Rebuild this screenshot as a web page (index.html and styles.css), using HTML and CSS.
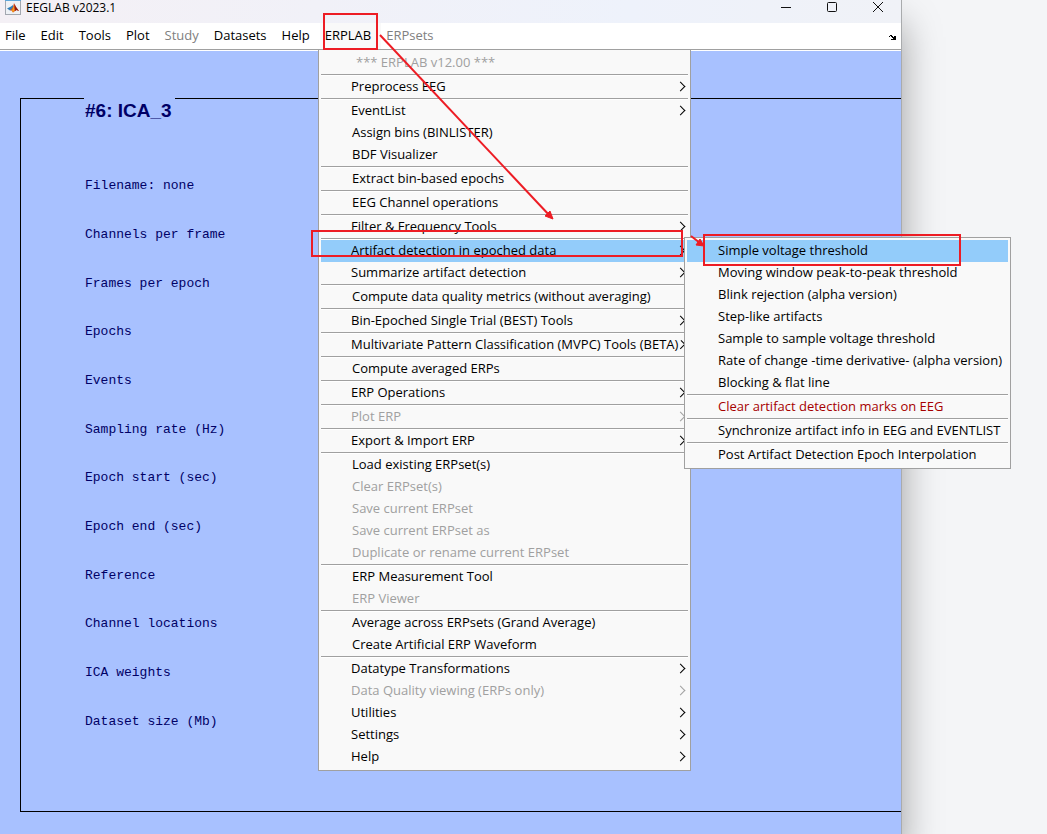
FILE: index.html
```html
<!DOCTYPE html>
<html lang="en">
<head>
<meta charset="utf-8">
<title>EEGLAB v2023.1</title>
<link rel="stylesheet" href="styles.css">
</head>
<body>
<div class="window">
  <header class="titlebar">
    <svg class="logo" viewBox="0 0 16 16" width="16" height="16" aria-hidden="true">
      <rect x="0.5" y="-2" width="15" height="16.5" fill="#eef1f5" stroke="#a3a8b0"/>
      <rect x="0" y="0" width="16" height="1" fill="#5fa6d8"/>
      <path d="M2 8.500 L6 6.500 L8 5 L8 9 L5 10.500 Z" fill="#2f7fb8"/>
      <path d="M5 10.500 L8 7 L9 3 L11 7 L14 11 L11.500 10 L8 12.500 L6.500 10.500 Z" fill="#d9541e"/>
      <path d="M9.500 4 L11 7 L14 11 L11.500 10 L10 11 Z" fill="#8f1d12"/>
      <path d="M7 11 L8.500 6 L9.500 10 L8 12.500 Z" fill="#f7a11b"/>
    </svg>
    <h1 class="app-name">EEGLAB v2023.1</h1>
    <div class="window-buttons">
      <button type="button" class="window-button" aria-label="Minimize"><svg width="12" height="12" viewBox="0 0 12 12"><path d="M1 6.500H11"/></svg></button>
      <button type="button" class="window-button" aria-label="Maximize"><svg width="12" height="12" viewBox="0 0 12 12"><rect x="1.500" y="1.500" width="9" height="9" rx="1"/></svg></button>
      <button type="button" class="window-button" aria-label="Close"><svg width="12" height="12" viewBox="0 0 12 12"><path d="M1 1L11 11M11 1L1 11"/></svg></button>
    </div>
  </header>

  <nav class="menubar">
    <button type="button" class="menu-title">File</button>
    <button type="button" class="menu-title">Edit</button>
    <button type="button" class="menu-title">Tools</button>
    <button type="button" class="menu-title">Plot</button>
    <button type="button" class="menu-title" disabled>Study</button>
    <button type="button" class="menu-title">Datasets</button>
    <button type="button" class="menu-title">Help</button>
    <button type="button" class="menu-title open">ERPLAB</button>
    <button type="button" class="menu-title" disabled>ERPsets</button>
    <svg class="dock" width="7" height="5" viewBox="0 0 7 5" aria-hidden="true"><path d="M0 1H1V0H3V1H4V2H5V1H7V5H2V4H4V3H3V2H2V1H1V2H0Z"/></svg>
  </nav>

  <main class="canvas">
    <section class="dataset">
      <h2 class="dataset-name">#6: ICA_3</h2>
      <ul class="fields">
        <li>Filename: none</li>
        <li>Channels per frame</li>
        <li>Frames per epoch</li>
        <li>Epochs</li>
        <li>Events</li>
        <li>Sampling rate (Hz)</li>
        <li>Epoch start (sec)</li>
        <li>Epoch end (sec)</li>
        <li>Reference</li>
        <li>Channel locations</li>
        <li>ICA weights</li>
        <li>Dataset size (Mb)</li>
      </ul>
    </section>
  </main>
</div>

<div class="menu main-menu">
  <button type="button" class="item heading" disabled>*** ERPLAB v12.00 ***</button>
  <hr>
  <button type="button" class="item sub">Preprocess EEG</button>
  <hr>
  <button type="button" class="item sub">EventList</button>
  <button type="button" class="item">Assign bins (BINLISTER)</button>
  <button type="button" class="item">BDF Visualizer</button>
  <hr>
  <button type="button" class="item">Extract bin-based epochs</button>
  <hr>
  <button type="button" class="item">EEG Channel operations</button>
  <hr>
  <button type="button" class="item sub">Filter &amp; Frequency Tools</button>
  <hr>
  <button type="button" class="item sub active">Artifact detection in epoched data</button>
  <button type="button" class="item sub">Summarize artifact detection</button>
  <hr>
  <button type="button" class="item">Compute data quality metrics (without averaging)</button>
  <hr>
  <button type="button" class="item sub">Bin-Epoched Single Trial (BEST) Tools</button>
  <hr>
  <button type="button" class="item sub">Multivariate Pattern Classification (MVPC) Tools (BETA)</button>
  <hr>
  <button type="button" class="item">Compute averaged ERPs</button>
  <hr>
  <button type="button" class="item sub">ERP Operations</button>
  <hr>
  <button type="button" class="item sub" disabled>Plot ERP</button>
  <hr>
  <button type="button" class="item sub">Export &amp; Import ERP</button>
  <hr>
  <button type="button" class="item">Load existing ERPset(s)</button>
  <button type="button" class="item" disabled>Clear ERPset(s)</button>
  <button type="button" class="item" disabled>Save current ERPset</button>
  <button type="button" class="item" disabled>Save current ERPset as</button>
  <button type="button" class="item" disabled>Duplicate or rename current ERPset</button>
  <hr>
  <button type="button" class="item">ERP Measurement Tool</button>
  <button type="button" class="item" disabled>ERP Viewer</button>
  <hr>
  <button type="button" class="item">Average across ERPsets (Grand Average)</button>
  <button type="button" class="item">Create Artificial ERP Waveform</button>
  <hr>
  <button type="button" class="item sub">Datatype Transformations</button>
  <button type="button" class="item sub" disabled>Data Quality viewing (ERPs only)</button>
  <button type="button" class="item sub">Utilities</button>
  <button type="button" class="item sub">Settings</button>
  <button type="button" class="item sub">Help</button>
</div>

<div class="menu side-menu">
  <button type="button" class="item active">Simple voltage threshold</button>
  <button type="button" class="item">Moving window peak-to-peak threshold</button>
  <button type="button" class="item">Blink rejection (alpha version)</button>
  <button type="button" class="item">Step-like artifacts</button>
  <button type="button" class="item">Sample to sample voltage threshold</button>
  <button type="button" class="item">Rate of change -time derivative- (alpha version)</button>
  <button type="button" class="item">Blocking &amp; flat line</button>
  <hr>
  <button type="button" class="item danger">Clear artifact detection marks on EEG</button>
  <hr>
  <button type="button" class="item">Synchronize artifact info in EEG and EVENTLIST</button>
  <hr>
  <button type="button" class="item">Post Artifact Detection Epoch Interpolation</button>
</div>

<svg class="marks" width="1047" height="834" viewBox="0 0 1047 834" aria-hidden="true">
  <rect x="324" y="14" width="53" height="35"/>
  <rect x="312" y="231" width="370" height="25"/>
  <rect x="704" y="235" width="256" height="30"/>
  <path d="M380 35L550 216"/>
  <path class="head" d="M553 219L545 216L550 211Z"/>
  <path d="M691 236L700 243"/>
  <path class="head" d="M704 246L696 245L700 239Z"/>
</svg>
</body>
</html>
```
FILE: styles.css
```css
* {
  box-sizing: border-box;
}

body {
  margin: 0;
  position: relative;
  min-height: 100vh;
  overflow: hidden;
  background: #f4f5f7;
  color: #000;
  font: 13px/20px "Open Sans", "Noto Sans", sans-serif;
}

button {
  margin: 0;
  border: 0;
  background: none;
  color: inherit;
  font: inherit;
}

.window {
  display: flex;
  flex-direction: column;
  min-height: 100vh;
  margin-right: 145px;
  border-right: 1px solid #a9abad;
  box-shadow: 0 24px 36px rgba(0, 0, 0, 0.36);
}

.titlebar {
  display: flex;
  align-items: flex-start;
  height: 23px;
  padding-left: 5px;
  background: linear-gradient(90deg, #f4f0f5, #eef2fb 70%, #f0f2f7);
}

.logo {
  margin-right: 5px;
}

.app-name {
  flex: 1;
  margin: 0;
  font: 12px/16px "Open Sans", "Noto Sans", sans-serif;
}

.window-buttons {
  display: flex;
}

.window-button {
  display: flex;
  justify-content: center;
  width: 46px;
  padding: 1px 0 0;
}

.window-button svg {
  fill: none;
  stroke: #111;
}

.menubar {
  display: flex;
  align-items: center;
  height: 28px;
  padding: 0 5px 0 0;
  background: linear-gradient(#fff 26px, #a0a0a0 26px, #a0a0a0 27px, #fff 27px);
}

.menu-title {
  height: 26px;
  margin-bottom: 2px;
  padding: 0 10px 2px 5px;
}

.menu-title:disabled {
  color: #808080;
}

.menu-title.open {
  background: #f9f9f9;
}

.dock {
  margin-left: auto;
}

.canvas {
  flex: 1;
  display: flex;
  padding: 47px 0 22px 20px;
  background: #a8c1ff;
}

.dataset {
  flex: 1;
  display: flex;
  flex-direction: column;
  align-items: flex-start;
  padding: 0 0 65px 63px;
  border: 1px solid #000;
  border-right: 0;
  color: #000066;
}

.dataset-name {
  margin: -1px 0 39px;
  padding: 0 3px 0 1px;
  background: #a8c1ff;
  font: bold 19px/25px "Liberation Sans", Arial, sans-serif;
}

.fields {
  flex: 1;
  display: grid;
  grid-auto-rows: 1fr;
  align-items: center;
  margin: 0;
  padding: 0 1px;
  list-style: none;
  font: 13px/16px "Liberation Mono", "Courier New", monospace;
}

.menu {
  position: absolute;
  display: flex;
  flex-direction: column;
  padding: 2px;
  border: 1px solid #a0a0a0;
  background: #f9f9f9;
}

.main-menu {
  top: 49px;
  left: 318px;
  width: 373px;
}

.side-menu {
  top: 237px;
  left: 684px;
  width: 327px;
}

.menu hr {
  width: 100%;
  height: 2px;
  margin: 0;
  border: 0;
  border-top: 1px solid #a0a0a0;
  background: #fff;
}

.item {
  display: flex;
  align-items: center;
  justify-content: space-between;
  height: 22px;
  padding: 0 4px 2px 31px;
  text-align: left;
  white-space: nowrap;
}

.item:disabled {
  color: #a0a0a0;
}

.heading {
  padding-left: 35px;
}

.sub {
  padding-left: 30px;
}

.sub::after {
  content: "";
  width: 6px;
  height: 6px;
  border: solid currentColor;
  border-width: 1px 1px 0 0;
  transform: rotate(45deg);
}

.active {
  background: #93ccfa;
}

.danger {
  color: #a60000;
}

.marks {
  position: absolute;
  top: 0;
  left: 0;
  pointer-events: none;
  fill: none;
  stroke: #ed1c24;
  stroke-width: 2;
}

.marks .head {
  fill: #ed1c24;
  stroke-width: 1;
}
```
